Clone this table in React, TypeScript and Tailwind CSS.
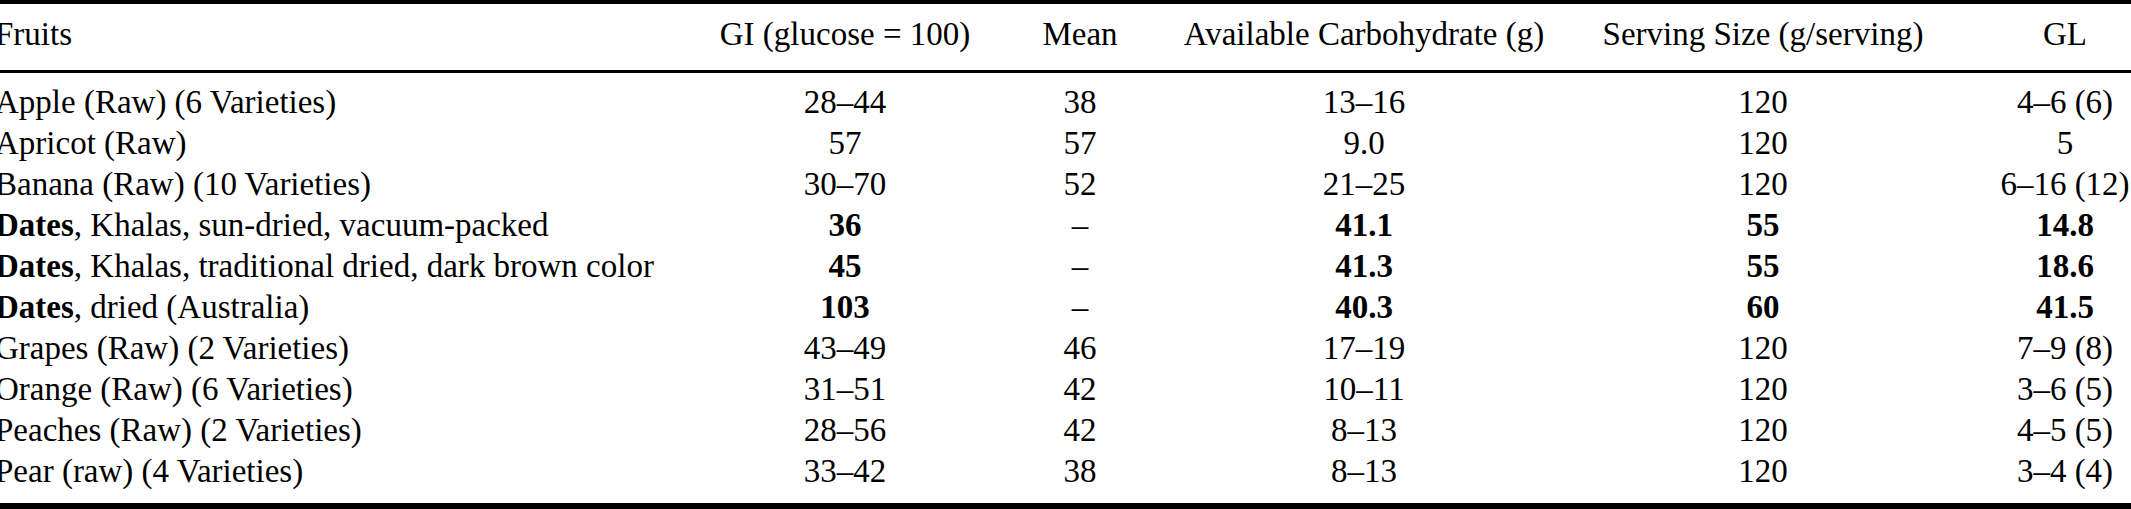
type Row = {
  name: string;
  bold?: string;
  gi: string;
  mean: string;
  carb: string;
  serving: string;
  gl: string;
};

const ROWS: Row[] = [
  { name: "Apple (Raw) (6 Varieties)", gi: "28–44", mean: "38", carb: "13–16", serving: "120", gl: "4–6 (6)" },
  { name: "Apricot (Raw)", gi: "57", mean: "57", carb: "9.0", serving: "120", gl: "5" },
  { name: "Banana (Raw) (10 Varieties)", gi: "30–70", mean: "52", carb: "21–25", serving: "120", gl: "6–16 (12)" },
  { bold: "Dates", name: ", Khalas, sun-dried, vacuum-packed", gi: "36", mean: "–", carb: "41.1", serving: "55", gl: "14.8" },
  { bold: "Dates", name: ", Khalas, traditional dried, dark brown color", gi: "45", mean: "–", carb: "41.3", serving: "55", gl: "18.6" },
  { bold: "Dates", name: ", dried (Australia)", gi: "103", mean: "–", carb: "40.3", serving: "60", gl: "41.5" },
  { name: "Grapes (Raw) (2 Varieties)", gi: "43–49", mean: "46", carb: "17–19", serving: "120", gl: "7–9 (8)" },
  { name: "Orange (Raw) (6 Varieties)", gi: "31–51", mean: "42", carb: "10–11", serving: "120", gl: "3–6 (5)" },
  { name: "Peaches (Raw) (2 Varieties)", gi: "28–56", mean: "42", carb: "8–13", serving: "120", gl: "4–5 (5)" },
  { name: "Pear (raw) (4 Varieties)", gi: "33–42", mean: "38", carb: "8–13", serving: "120", gl: "3–4 (4)" },
];

const grid =
  "grid grid-cols-[705px_290px_180px_388px_400px_173px] -ml-[5px] whitespace-nowrap";

export default function App() {
  return (
    <div className="w-[2131px] h-[509px] overflow-hidden bg-white text-black font-['Liberation_Serif',serif] text-[33px] leading-[41px]">
      <div className="h-[4px] bg-black" />

      {/* header */}
      <div className={`${grid} pt-[10px] pb-[15px]`}>
        <div>Fruits</div>
        <div className="text-center">GI (glucose = 100)</div>
        <div className="text-center">Mean</div>
        <div className="text-center">Available Carbohydrate (g)</div>
        <div className="text-center pl-[10px]">Serving Size (g/serving)</div>
        <div className="text-center pl-[41px]">GL</div>
      </div>

      <div className="h-[3px] bg-black" />

      <div className="pt-[9px] pb-[11px]">
        {ROWS.map((r) => {
          const b = r.bold ? "font-bold" : "";
          return (
            <div key={(r.bold ?? "") + r.name} className={grid}>
              <div>
                {r.bold && <span className="font-bold">{r.bold}</span>}
                {r.name}
              </div>
              <div className={`text-center ${b}`}>{r.gi}</div>
              <div className="text-center">{r.mean}</div>
              <div className={`text-center ${b}`}>{r.carb}</div>
              <div className={`text-center pl-[10px] ${b}`}>{r.serving}</div>
              <div className={`text-center pl-[41px] ${b}`}>{r.gl}</div>
            </div>
          );
        })}
      </div>

      <div className="h-[6px] bg-black" />
    </div>
  );
}
